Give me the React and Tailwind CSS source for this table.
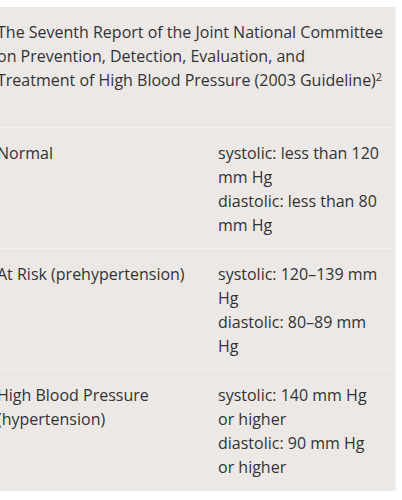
export default function App() {
  const rows = [
    {
      label: ["Normal"],
      values: ["systolic: less than 120", "mm Hg", "diastolic: less than 80", "mm Hg"],
    },
    {
      label: ["At Risk (prehypertension)"],
      values: ["systolic: 120–139 mm", "Hg", "diastolic: 80–89 mm", "Hg"],
    },
    {
      label: ["High Blood Pressure", "(hypertension)"],
      values: ["systolic: 140 mm Hg", "or higher", "diastolic: 90 mm Hg", "or higher"],
    },
  ];

  return (
    <div className="w-[402px] h-[500px] bg-white overflow-hidden pt-[7px] text-[#333] text-[16px] leading-[24px]" style={{ fontFamily: '"Open Sans", sans-serif' }}>
      <div className="ml-[-19px] w-[415px] bg-[#ebe8e6] border-r border-[#f4f2f1]">
        <div className="h-[121px] pl-[16px] pt-[13px] whitespace-nowrap border-b border-[#f4f2f1]">
          The Seventh Report of the Joint National Committee
          <br />
          on Prevention, Detection, Evaluation, and
          <br />
          Treatment of High Blood Pressure (2003 Guideline)<sup className="text-[11px]">2</sup>
        </div>
        {rows.map((row, i) => (
          <div key={i} className={`grid grid-cols-[237px_1fr] h-[121px] pt-[13px] ${i < rows.length - 1 ? "border-b border-[#f4f2f1]" : ""}`}>
            <div className="pl-[16px]">
              {row.label.map((l) => (
                <div key={l}>{l}</div>
              ))}
            </div>
            <div>
              {row.values.map((v, j) => (
                <div key={j}>{v}</div>
              ))}
            </div>
          </div>
        ))}
      </div>
    </div>
  );
}
